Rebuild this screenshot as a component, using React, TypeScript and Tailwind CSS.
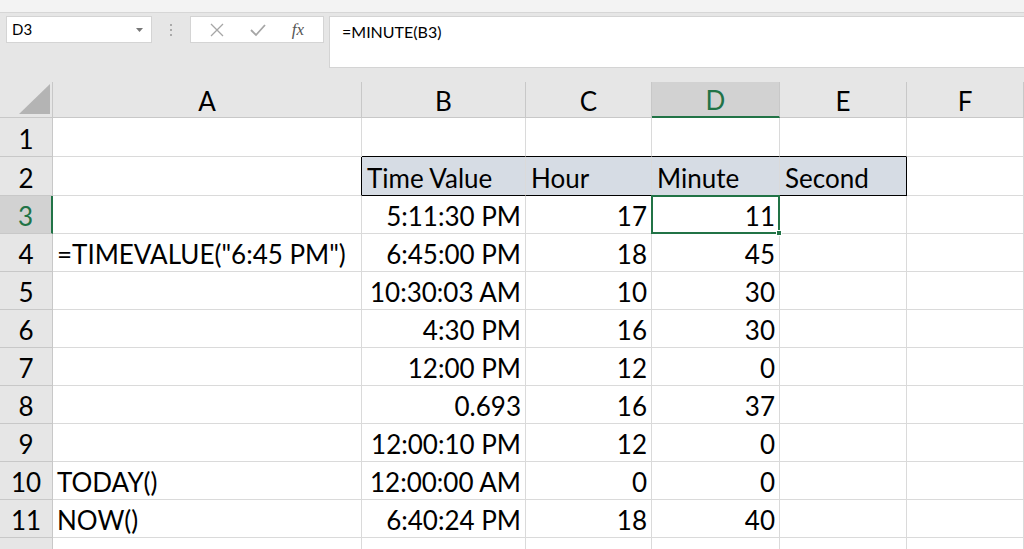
import React from "react";

const cols = [
  { key: "A", w: "w-[309px]" },
  { key: "B", w: "w-[164px]" },
  { key: "C", w: "w-[126px]" },
  { key: "D", w: "w-[128px]" },
  { key: "E", w: "w-[127px]" },
  { key: "F", w: "flex-1" },
];

type Row = { a?: string; b?: string; c?: string; d?: string };

const rows: Row[] = [
  {},
  {},
  { b: "5:11:30 PM", c: "17", d: "11" },
  { a: '=TIMEVALUE("6:45 PM")', b: "6:45:00 PM", c: "18", d: "45" },
  { b: "10:30:03 AM", c: "10", d: "30" },
  { b: "4:30 PM", c: "16", d: "30" },
  { b: "12:00 PM", c: "12", d: "0" },
  { b: "0.693", c: "16", d: "37" },
  { b: "12:00:10 PM", c: "12", d: "0" },
  { a: "TODAY()", b: "12:00:00 AM", c: "0", d: "0" },
  { a: "NOW()", b: "6:40:24 PM", c: "18", d: "40" },
  {},
];

const headers = ["Time Value", "Hour", "Minute", "Second"];

function Cell({ rowIdx, col, value }: { rowIdx: number; col: number; value?: string }) {
  const r = rowIdx + 1;
  const inHeader = r === 2 && col >= 1 && col <= 4;
  const aboveHeader = r === 1 && col >= 1 && col <= 4;
  const leftOfHeader = r === 2 && col === 0;
  const selected = r === 3 && col === 3;

  let cls = `${cols[col].w} shrink-0 relative flex items-center h-full pt-[4px] border-b border-r `;
  cls += inHeader ? "bg-[#d6dce4] " : "bg-white ";
  cls += inHeader || aboveHeader ? "border-b-black " : "border-b-[#dadada] ";
  cls += leftOfHeader || (inHeader && col === 4) ? "border-r-black " : "border-r-[#dadada] ";

  let text = value;
  let align = "justify-end pr-[4px]";
  if (col === 0) align = "justify-start pl-[4px]";
  if (inHeader) {
    text = headers[col - 1];
    align = "justify-start pl-[5px]";
  }

  return (
    <div className={`${cls} ${align}`}>
      {text && <span className="whitespace-nowrap">{text}</span>}
      {selected && (
        <div className="absolute -top-[1px] -left-[1px] -right-[1px] -bottom-[1px] border-2 border-[#217346] z-10 pointer-events-none">
          <div className="absolute -right-[4px] -bottom-[4px] w-[6px] h-[6px] bg-[#217346] border border-white" />
        </div>
      )}
    </div>
  );
}

export default function App() {
  return (
    <div className="w-[1024px] h-[549px] overflow-hidden bg-[#e6e6e6] text-black font-['Lato','Open_Sans',sans-serif]">
      {/* ribbon edge */}
      <div className="h-[13px] bg-[#f3f3f3] border-b border-[#d6d6d6]" />

      {/* Formula bar */}
      <div className="flex items-start h-[55px] pt-[3px]">
        <div className="ml-[6px] w-[146px] h-[27px] bg-white border border-[#d4d4d4] flex items-center justify-between pl-[5px] pr-[8px] text-[15px]">
          <span>D3</span>
          <svg width="7" height="4" viewBox="0 0 7 4">
            <path d="M0 0 L7 0 L3.5 4 Z" fill="#777" />
          </svg>
        </div>
        <div className="w-[38px] h-[27px] flex flex-col items-center justify-center gap-[3px]">
          <span className="w-[2px] h-[2px] bg-[#aaa]" />
          <span className="w-[2px] h-[2px] bg-[#aaa]" />
          <span className="w-[2px] h-[2px] bg-[#aaa]" />
        </div>
        <div className="w-[134px] h-[27px] bg-white border border-[#d4d4d4] flex items-center justify-around px-[6px]">
          <svg width="14" height="14" viewBox="0 0 14 14">
            <path d="M1 1 L13 13 M13 1 L1 13" stroke="#a6a6a6" strokeWidth="1.3" />
          </svg>
          <svg width="16" height="14" viewBox="0 0 16 14">
            <path d="M1 7 L6 12 L15 2" stroke="#a6a6a6" strokeWidth="1.8" fill="none" />
          </svg>
          <span className="italic text-[17px] text-[#555] leading-none font-['Liberation_Serif',serif]">fx</span>
        </div>
        <div className="ml-[5px] flex-1 h-[52px] bg-white border border-[#d4d4d4] border-r-0 pl-[12px] pt-[3px] text-[16px]">
          =MINUTE(B3)
        </div>
      </div>

      <div className="h-[14px]" />

      {/* Column headers */}
      <div className="flex h-[36px] text-[26px]">
        <div className="w-[53px] shrink-0 border-r border-b border-[#c8c8c8] flex items-end justify-end pr-[2px] pb-[3px]">
          <svg width="31" height="30" viewBox="0 0 31 30">
            <path d="M31 0 L31 30 L0 30 Z" fill="#b4b4b4" />
          </svg>
        </div>
        {cols.map((c) => {
          const active = c.key === "D";
          return (
            <div
              key={c.key}
              className={`${c.w} shrink-0 flex items-center justify-center pt-[3px] border-r ${
                active
                  ? "bg-[#d2d2d2] text-[#217346] border-b-2 border-b-[#217346] border-r-[#c8c8c8]"
                  : "bg-[#e6e6e6] border-b border-[#c8c8c8]"
              }`}
            >
              {c.key}
            </div>
          );
        })}
      </div>

      {/* Grid rows */}
      {rows.map((row, i) => {
        const active = i === 2;
        const h = i < 2 ? "h-[39px]" : "h-[38px]";
        return (
          <div key={i} className={`flex ${h} text-[26px]`}>
            <div
              className={`w-[53px] shrink-0 flex items-center justify-center pt-[4px] border-b border-[#c8c8c8] ${
                active
                  ? "bg-[#d2d2d2] text-[#217346] border-r-2 border-r-[#217346]"
                  : "bg-[#e6e6e6] border-r"
              }`}
            >
              {i < 11 ? i + 1 : ""}
            </div>
            <Cell rowIdx={i} col={0} value={row.a} />
            <Cell rowIdx={i} col={1} value={row.b} />
            <Cell rowIdx={i} col={2} value={row.c} />
            <Cell rowIdx={i} col={3} value={row.d} />
            <Cell rowIdx={i} col={4} />
            <Cell rowIdx={i} col={5} />
          </div>
        );
      })}
    </div>
  );
}
